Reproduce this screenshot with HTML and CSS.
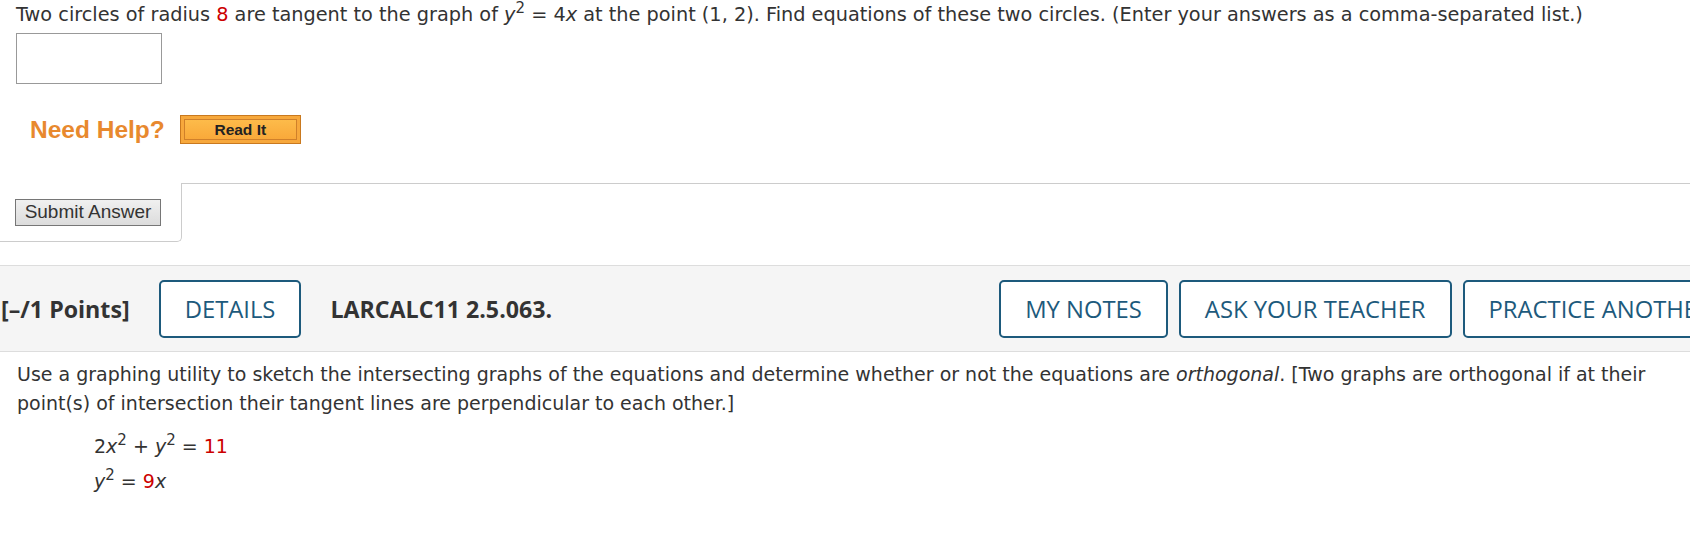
FILE: index.html
```html
<!DOCTYPE html>
<html lang="en">
<head>
    <meta charset="UTF-8">
    <title>LARCALC11 2.5.063</title>
    <link rel="stylesheet" href="styles.css">
</head>
<body>

    <div class="question">
        <p class="prompt">Two circles of radius <span class="red">8</span> are tangent to the graph of <i>y</i><sup>2</sup> = 4<i>x</i> at the point (1, 2). Find equations of these two circles. (Enter your answers as a comma-separated list.)</p>
        <input class="answer" type="text">

        <div class="help">
            <span class="need-help">Need Help?</span>
            <button class="read-it"><span>Read It</span></button>
        </div>
    </div>

    <div class="submit-row">
        <div class="submit-cell">
            <button class="submit">Submit Answer</button>
        </div>
        <div class="submit-fill"></div>
    </div>

    <div class="qheader">
        <span class="points">[&ndash;/1 Points]</span>
        <button class="btn">DETAILS</button>
        <span class="qref">LARCALC11 2.5.063.</span>
        <div class="actions">
            <button class="btn">MY NOTES</button>
            <button class="btn">ASK YOUR TEACHER</button>
            <button class="btn">PRACTICE ANOTHER</button>
        </div>
    </div>

    <div class="qbody">
        <p class="text">Use a graphing utility to sketch the intersecting graphs of the equations and determine whether or not the equations are <i>orthogonal</i>. [Two graphs are orthogonal if at their point(s) of intersection their tangent lines are perpendicular to each other.]</p>
        <div class="eqs">
            <div>2<i>x</i><sup>2</sup> + <i>y</i><sup>2</sup> = <span class="red">11</span></div>
            <div><i>y</i><sup>2</sup> = <span class="red">9</span><i>x</i></div>
        </div>
    </div>

</body>
</html>
```

FILE: styles.css
```css
body {
    margin: 0;
    font-family: "DejaVu Sans", Verdana, sans-serif;
    font-size: 19px;
    color: #333;
    background-color: white;
    overflow: hidden;
}

.red {
    color: #c00;
}

sup {
    font-size: 15px;
    line-height: 0;
    vertical-align: 8px;
}

.question {
    padding-left: 16px;
}

.prompt {
    margin: 0;
    padding-top: 4px;
    font-size: 19.3px;
    line-height: 22px;
}

.answer {
    display: block;
    box-sizing: border-box;
    width: 146px;
    height: 51px;
    margin-top: 7px;
    border: 1px solid #999;
}

.help {
    display: flex;
    align-items: center;
    margin-top: 31px;
    height: 29px;
}

.need-help {
    font-family: "Liberation Sans", Arial, sans-serif;
    font-weight: bold;
    font-size: 24.5px;
    color: #e8892e;
    margin-left: 14px;
}

.read-it {
    box-sizing: border-box;
    width: 121px;
    height: 29px;
    margin-left: 15px;
    padding: 3px;
    border: 1px solid #c9791f;
    background-color: #f7a83c;
    cursor: pointer;
}

.read-it span {
    display: block;
    height: 100%;
    box-sizing: border-box;
    border: 1px solid #d0802a;
    background: linear-gradient(#fdbb4a, #f9a93a);
    font-family: "Liberation Sans", Arial, sans-serif;
    font-weight: bold;
    font-size: 15.5px;
    line-height: 19px;
    color: #222;
}

.submit-row {
    display: flex;
    margin-top: 39px;
}

.submit-cell {
    box-sizing: border-box;
    width: 182px;
    height: 59px;
    display: flex;
    align-items: center;
    padding-left: 15px;
    border-right: 1px solid #ccc;
    border-bottom: 1px solid #ccc;
    border-bottom-right-radius: 5px;
}

.submit {
    box-sizing: border-box;
    width: 146px;
    height: 27px;
    padding: 0;
    border: 1px solid #767676;
    background: linear-gradient(#f0f0f0, #dcdcdc);
    font-family: "Liberation Sans", Arial, sans-serif;
    font-size: 19px;
    color: #333;
}

.submit-fill {
    flex: 1;
    border-top: 1px solid #ccc;
}

.qheader {
    display: flex;
    align-items: center;
    box-sizing: border-box;
    width: 1900px;
    height: 87px;
    margin-top: 23px;
    padding-left: 1px;
    background-color: #f5f5f5;
    border-top: 1px solid #ddd;
    border-bottom: 1px solid #ddd;
    font-family: "Open Sans", sans-serif;
}

.points,
.qref {
    font-weight: bold;
    font-size: 23.2px;
    color: #333;
}

.qref {
    margin-left: 29px;
}

.btn {
    box-sizing: border-box;
    height: 58px;
    padding: 0 24px;
    margin-left: 29px;
    border: 2px solid #1d5a7c;
    border-radius: 5px;
    background-color: white;
    font-family: "Open Sans", sans-serif;
    font-size: 23.8px;
    color: #1d5a7c;
}

.actions {
    display: flex;
    gap: 11px;
    margin-left: 447px;
}

.actions .btn {
    margin-left: 0;
}

.qbody {
    padding: 8px 17px 0;
}

.text {
    margin: 0;
    line-height: 29px;
}

.eqs {
    margin-top: 11px;
    padding-left: 77px;
    line-height: 35px;
}
```
